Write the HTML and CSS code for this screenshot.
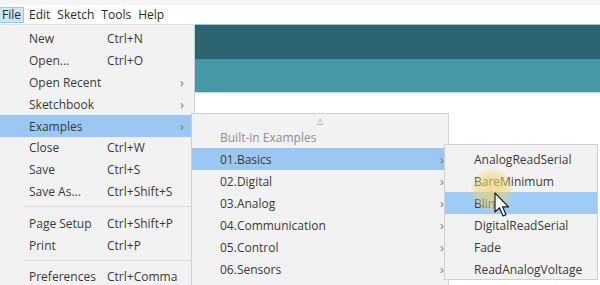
FILE: index.html
```html
<!DOCTYPE html>
<html>
<head>
<meta charset="utf-8">
<link rel="stylesheet" href="styles.css">
</head>
<body>
<div class="menubar">
  <span class="mb-item active">File</span>
  <span class="mb-item">Edit</span>
  <span class="mb-item">Sketch</span>
  <span class="mb-item">Tools</span>
  <span class="mb-item">Help</span>
</div>
<div class="toolbar"></div>
<div class="tabbar"></div>

<div class="menu file-menu">
  <div class="mi"><span class="lbl">New</span><span class="sc">Ctrl+N</span></div>
  <div class="mi"><span class="lbl">Open...</span><span class="sc">Ctrl+O</span></div>
  <div class="mi"><span class="lbl">Open Recent</span><span class="sc"></span><span class="arr">›</span></div>
  <div class="mi"><span class="lbl">Sketchbook</span><span class="sc"></span><span class="arr">›</span></div>
  <div class="mi hl"><span class="lbl">Examples</span><span class="sc"></span><span class="arr">›</span></div>
  <div class="mi"><span class="lbl">Close</span><span class="sc">Ctrl+W</span></div>
  <div class="mi"><span class="lbl">Save</span><span class="sc">Ctrl+S</span></div>
  <div class="mi"><span class="lbl">Save As...</span><span class="sc">Ctrl+Shift+S</span></div>
  <div class="sep"></div>
  <div class="mi"><span class="lbl">Page Setup</span><span class="sc">Ctrl+Shift+P</span></div>
  <div class="mi"><span class="lbl">Print</span><span class="sc">Ctrl+P</span></div>
  <div class="sep"></div>
  <div class="mi"><span class="lbl">Preferences</span><span class="sc">Ctrl+Comma</span></div>
</div>

<div class="menu ex-menu">
  <div class="scroll-up">△</div>
  <div class="si head">Built-in Examples</div>
  <div class="si hl"><span>01.Basics</span><span class="arr">›</span></div>
  <div class="si"><span>02.Digital</span><span class="arr">›</span></div>
  <div class="si"><span>03.Analog</span><span class="arr">›</span></div>
  <div class="si"><span>04.Communication</span><span class="arr">›</span></div>
  <div class="si"><span>05.Control</span><span class="arr">›</span></div>
  <div class="si"><span>06.Sensors</span><span class="arr">›</span></div>
</div>

<div class="menu basics-menu">
  <div class="bi">AnalogReadSerial</div>
  <div class="bi">BareMinimum</div>
  <div class="bi hl2">Blink</div>
  <div class="bi">DigitalReadSerial</div>
  <div class="bi">Fade</div>
  <div class="bi">ReadAnalogVoltage</div>
</div>

<div class="click-glow"></div>
<svg class="cursor" width="18" height="27" viewBox="0 0 18 27">
  <path d="M1 1 L1 20 L5.5 15.8 L9 24 L12 22.7 L8.6 14.8 L14.5 14.8 Z" fill="#ffffff" stroke="#1a1a1a" stroke-width="1.2" stroke-linejoin="round"/>
</svg>
</body>
</html>
```
FILE: styles.css
```css
html, body {
  margin: 0;
  padding: 0;
}
body {
  width: 600px;
  height: 285px;
  overflow: hidden;
  position: relative;
  background: #ffffff;
  font-family: "Open Sans", "Noto Sans", sans-serif;
  font-size: 12px;
  color: #3a3a3a;
}
.menubar {
  height: 24px;
  display: flex;
  align-items: flex-start;
  padding-top: 7px;
  background: linear-gradient(#f4f4f4 0, #f4f4f4 4px, #fdfdfd 5px, #ffffff 24px);
  box-sizing: border-box;
  font-size: 12px;
  color: #2a2a2a;
}
.mb-item {
  padding: 0 1px;
  margin-right: 3px;
  border: 1px solid transparent;
  line-height: 14px;
}
.mb-item.active {
  background: #cde6f7;
  border-color: #98c8ec;
  border-left-color: transparent;
  padding-left: 1px;
  padding-right: 2px;
}
.toolbar {
  height: 35px;
  background: #2c6472;
  border-top: 1px solid #9cc8d2;
  box-sizing: border-box;
}
.tabbar {
  height: 34px;
  background: #4799a8;
  border-bottom: 1px solid #b9dbe2;
  box-sizing: border-box;
}
.menu {
  position: absolute;
  background: #f2f2f2;
  border: 1px solid #cfcfcf;
  box-sizing: border-box;
}
.file-menu {
  left: 0;
  top: 24px;
  width: 195px;
  height: 270px;
  padding-top: 3px;
  border-left: none;
  border-top: 1px solid #e0e0e0;
}
.mi {
  height: 21.8px;
  display: grid;
  grid-template-columns: 29px 78px 1fr 14px;
  align-items: center;
}
.mi .lbl { grid-column: 2; white-space: nowrap; }
.mi .sc { grid-column: 3; white-space: nowrap; }
.mi .arr { grid-column: 4; }
.arr {
  color: #777;
  font-size: 13px;
  line-height: 1;
}
.hl {
  background: #9ac8f2;
}
.hl2 {
  background: #a0cbf4;
}
.sep {
  height: 10px;
  margin-left: 24px;
  margin-right: 2px;
  background: linear-gradient(transparent 4px, #d9d9d9 4px, #d9d9d9 5px, transparent 5px);
}
.ex-menu {
  left: 191px;
  top: 113px;
  width: 258px;
  height: 180px;
  border-right-color: #d6d6d6;
}
.scroll-up {
  height: 12px;
  text-align: center;
  font-size: 8px;
  color: #999;
  line-height: 14px;
}
.si {
  height: 22px;
  display: flex;
  align-items: center;
  justify-content: space-between;
  padding-left: 28px;
  padding-right: 4px;
  white-space: nowrap;
}
.si.head {
  color: #8f8f8f;
}
.basics-menu {
  left: 444px;
  top: 144px;
  width: 154px;
  height: 136px;
  padding-top: 3px;
}
.bi {
  height: 22px;
  display: flex;
  align-items: center;
  padding-left: 29px;
  white-space: nowrap;
}
.click-glow {
  position: absolute;
  left: 470px;
  top: 168px;
  width: 44px;
  height: 44px;
  border-radius: 50%;
  background: radial-gradient(circle, rgba(238, 214, 110, 0.7) 0, rgba(238, 214, 110, 0.5) 50%, rgba(238, 214, 110, 0) 72%);
}
.cursor {
  position: absolute;
  left: 494px;
  top: 192px;
}
```
